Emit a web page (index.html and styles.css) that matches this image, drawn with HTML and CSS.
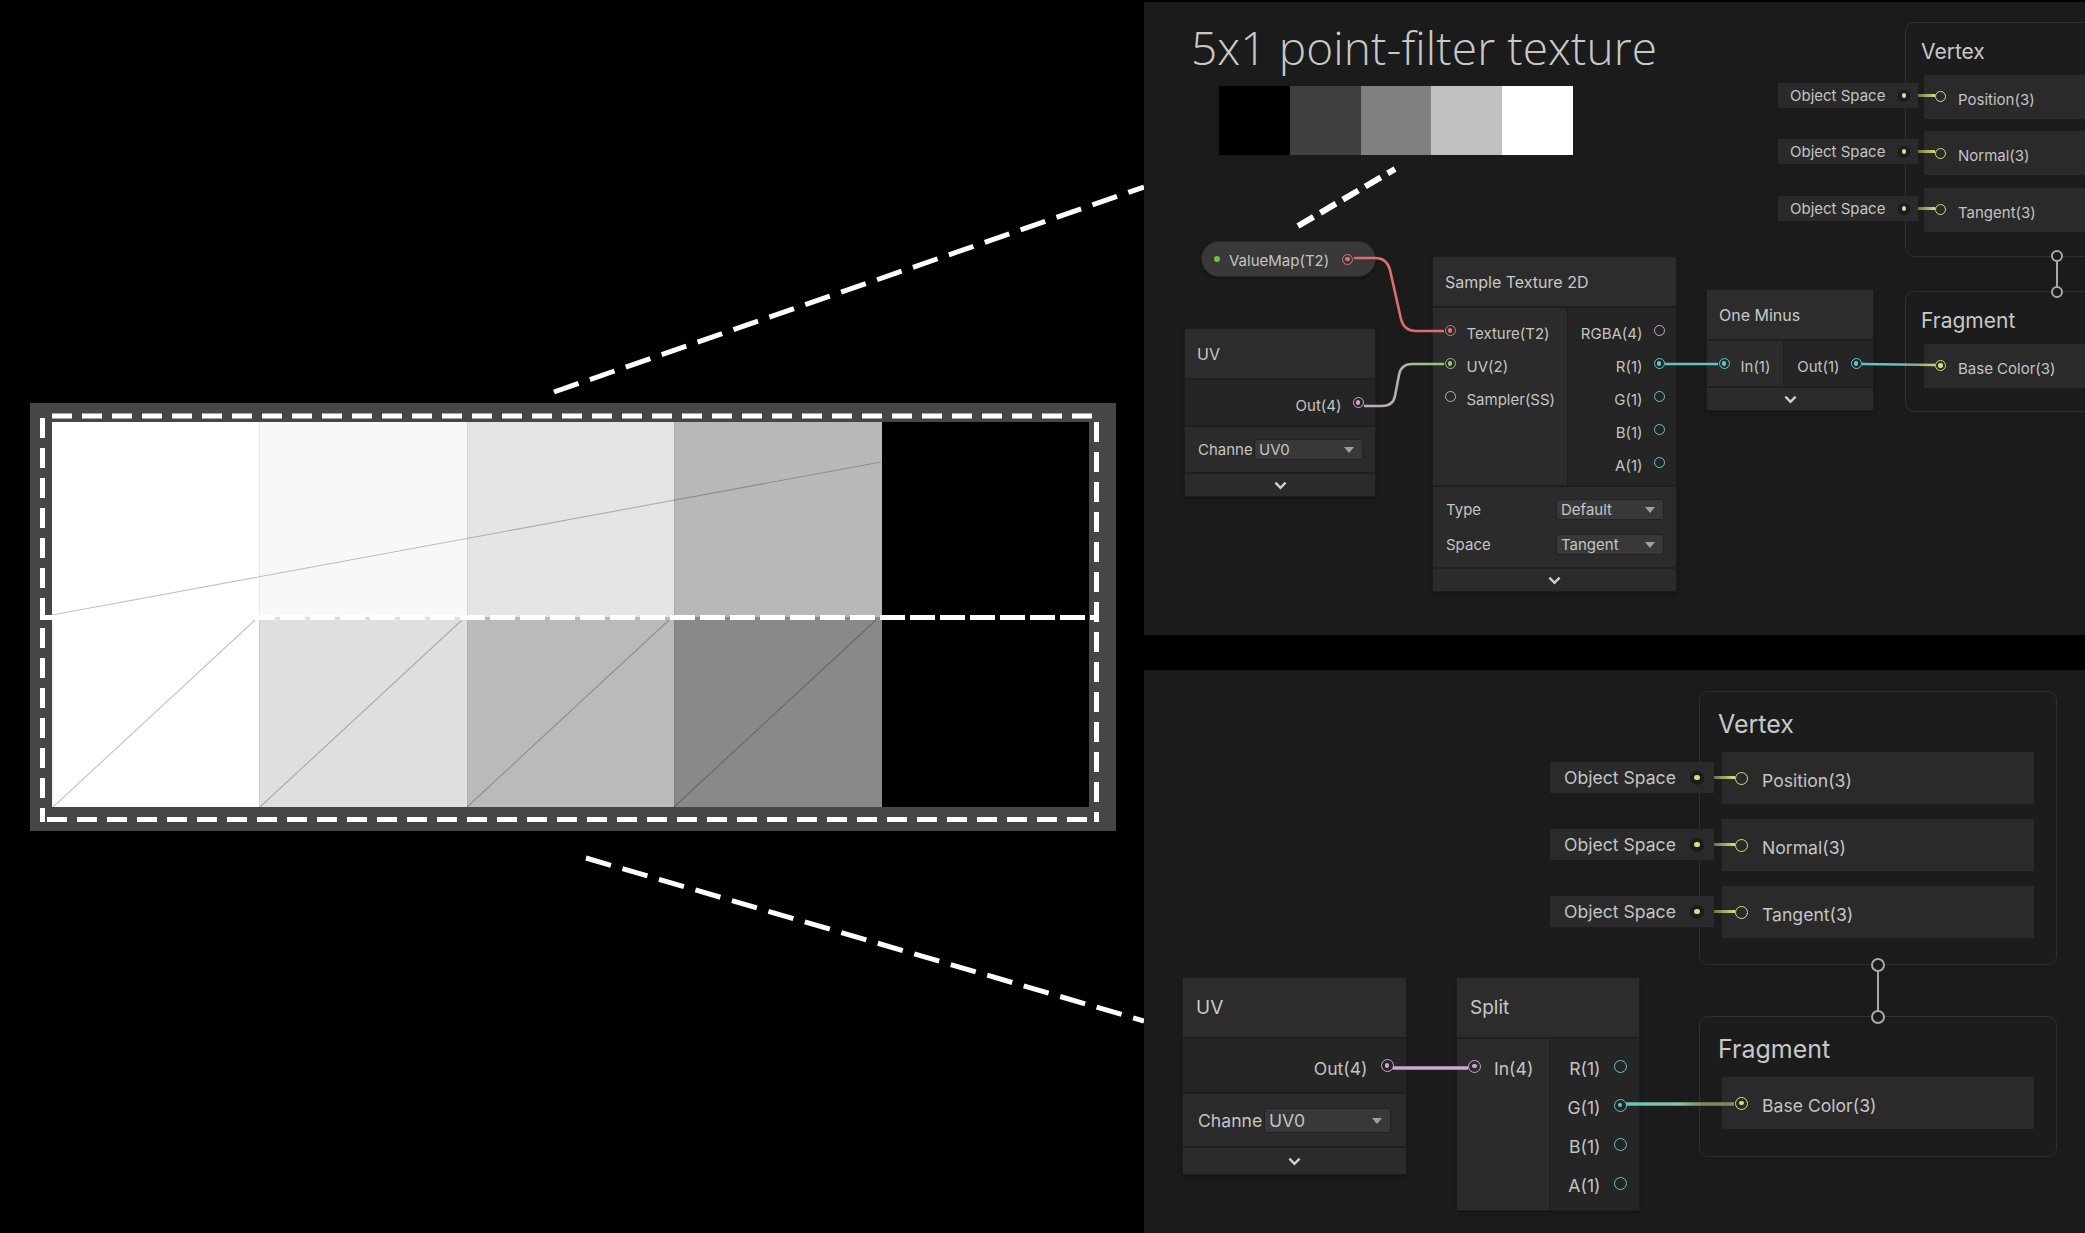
FILE: index.html
```html
<!DOCTYPE html>
<html lang="en">
<head>
  <meta charset="UTF-8">
  <meta name="viewport" content="width=device-width, initial-scale=1.0">
  <title>Point-filter texture - Shader Graph</title>
  <link rel="stylesheet" href="styles.css">
</head>
<body>
  <main class="stage">

    <!-- magnified render of the quad -->
    <section class="zoom-area">
      <div class="frame">
        <div class="texels">
          <div class="texel a1"></div>
          <div class="texel a2"></div>
          <div class="texel a3"></div>
          <div class="texel a4"></div>
          <div class="texel a5"></div>
          <div class="texel b1"></div>
          <div class="texel b2"></div>
          <div class="texel b3"></div>
          <div class="texel b4"></div>
          <div class="texel b5"></div>
        </div>
      </div>

      <svg class="overlay" width="1144" height="1233" viewBox="0 0 1144 1233">
        <!-- triangle edges -->
        <g stroke="rgba(0,0,0,0.24)" stroke-width="1.1">
          <line x1="52" y1="615" x2="881" y2="462"/>
          <line x1="53" y1="807" x2="255" y2="620"/>
          <line x1="260" y1="807" x2="462" y2="620"/>
          <line x1="467" y1="807" x2="669" y2="620"/>
          <line x1="674" y1="807" x2="876" y2="620"/>
        </g>
        <!-- selection outline -->
        <g stroke="#fff" stroke-width="5" fill="none">
          <line x1="52" y1="416" x2="1094" y2="416" stroke-dasharray="20 10"/>
          <line x1="42.5" y1="418" x2="42.5" y2="822" stroke-dasharray="20 10"/>
          <line x1="1096.5" y1="422" x2="1096.5" y2="822" stroke-dasharray="20 10"/>
          <line x1="43" y1="819.5" x2="1099" y2="819.5" stroke-dasharray="20 10" stroke-dashoffset="-4"/>
          <line x1="40" y1="617.5" x2="1099" y2="617.5" stroke-dasharray="25 5"/>
        </g>
        <!-- callout lines toward the graphs -->
        <g stroke="#fff" stroke-width="5" stroke-dasharray="26 12">
          <line x1="554" y1="392" x2="1144" y2="187"/>
          <line x1="586" y1="858" x2="1144" y2="1021"/>
        </g>
      </svg>
    </section>

    <section class="graphs">

      <!-- graph 1: sample texture, one minus -->
      <div class="graph graph-top">
        <div class="texture-card">
          <h1 class="texture-title">5x1 point-filter texture</h1>
          <div class="swatch">
            <span class="sw sw-0"></span>
            <span class="sw sw-1"></span>
            <span class="sw sw-2"></span>
            <span class="sw sw-3"></span>
            <span class="sw sw-4"></span>
          </div>
        </div>

        <div class="pill valuemap">
          <span class="pill-dot"></span>
          <span class="pill-label">ValueMap(T2)</span>
          <span class="port red on"></span>
        </div>

        <div class="node uv-top">
          <div class="node-title">UV</div>
          <div class="node-ports">
            <div class="port-col outputs">
              <div class="port-row">Out(4)<span class="port pink on"></span></div>
            </div>
          </div>
          <div class="node-controls">
            <div class="control">
              <span class="control-label">Channe</span>
              <span class="dropdown dd-channel">UV0</span>
            </div>
          </div>
          <div class="node-footer">
            <svg class="chevron" viewBox="0 0 14 9"><path d="M1.5 1.5 L7 7 L12.5 1.5"/></svg>
          </div>
        </div>

        <div class="node sample-tex">
          <div class="node-title">Sample Texture 2D</div>
          <div class="node-ports">
            <div class="port-col inputs">
              <div class="port-row"><span class="port red on"></span>Texture(T2)</div>
              <div class="port-row"><span class="port green on"></span>UV(2)</div>
              <div class="port-row"><span class="port grey"></span>Sampler(SS)</div>
            </div>
            <div class="port-col outputs">
              <div class="port-row">RGBA(4)<span class="port pink"></span></div>
              <div class="port-row">R(1)<span class="port cyan on"></span></div>
              <div class="port-row">G(1)<span class="port cyan"></span></div>
              <div class="port-row">B(1)<span class="port cyan"></span></div>
              <div class="port-row">A(1)<span class="port cyan"></span></div>
            </div>
          </div>
          <div class="node-controls settings">
            <div class="control">
              <span class="control-label">Type</span>
              <span class="dropdown dd-setting">Default</span>
            </div>
            <div class="control">
              <span class="control-label">Space</span>
              <span class="dropdown dd-setting">Tangent</span>
            </div>
          </div>
          <div class="node-footer">
            <svg class="chevron" viewBox="0 0 14 9"><path d="M1.5 1.5 L7 7 L12.5 1.5"/></svg>
          </div>
        </div>

        <div class="node one-minus">
          <div class="node-title">One Minus</div>
          <div class="node-ports">
            <div class="port-col inputs">
              <div class="port-row"><span class="port cyan on"></span>In(1)</div>
            </div>
            <div class="port-col outputs">
              <div class="port-row">Out(1)<span class="port cyan on"></span></div>
            </div>
          </div>
          <div class="node-footer">
            <svg class="chevron" viewBox="0 0 14 9"><path d="M1.5 1.5 L7 7 L12.5 1.5"/></svg>
          </div>
        </div>

        <div class="stack vertex-top">
          <div class="stack-title">Vertex</div>
          <div class="stack-slot"><span class="port yellow"></span>Position(3)</div>
          <div class="stack-slot"><span class="port yellow"></span>Normal(3)</div>
          <div class="stack-slot"><span class="port yellow"></span>Tangent(3)</div>
        </div>

        <div class="stack fragment-top">
          <div class="stack-title">Fragment</div>
          <div class="stack-slot"><span class="port yellow on"></span>Base Color(3)</div>
        </div>

        <div class="obj-space os-1"><div class="obj-box">Object Space<span class="obj-dot"></span></div><span class="obj-wire"></span></div>
        <div class="obj-space os-2"><div class="obj-box">Object Space<span class="obj-dot"></span></div><span class="obj-wire"></span></div>
        <div class="obj-space os-3"><div class="obj-box">Object Space<span class="obj-dot"></span></div><span class="obj-wire"></span></div>

        <svg class="overlay" width="941" height="633" viewBox="0 0 941 633">
          <defs>
            <linearGradient id="uvEdge" gradientUnits="userSpaceOnUse" x1="220" y1="0" x2="300" y2="0">
              <stop offset="0" stop-color="#c9a2cc"/>
              <stop offset="1" stop-color="#8cc97c"/>
            </linearGradient>
            <linearGradient id="colorEdge" gradientUnits="userSpaceOnUse" x1="718" y1="0" x2="791" y2="0">
              <stop offset="0.45" stop-color="#5fc3cc"/>
              <stop offset="0.75" stop-color="#8ea884"/>
              <stop offset="1" stop-color="#c9cf7e"/>
            </linearGradient>
          </defs>
          <line class="callout" x1="154" y1="224" x2="251" y2="167"/>
          <g fill="none" stroke-width="2.6">
            <path stroke="#dc6f6d" d="M210 256 L231 256 Q243 256 246 268 L257 317 Q260 329 272 329 L300 329"/>
            <path stroke="url(#uvEdge)" d="M220 404 L238 404 Q249 404 251 394 L255 373 Q257 362 268 362 L300 362"/>
            <line stroke="#5fc3cc" x1="521" y1="362" x2="574" y2="362"/>
            <line stroke="url(#colorEdge)" x1="718" y1="362" x2="791" y2="363"/>
          </g>
          <g class="flow" fill="#1b1b1b">
            <line x1="913" y1="259" x2="913" y2="285"/>
            <circle cx="913" cy="254" r="5"/>
            <circle cx="913" cy="290" r="5"/>
          </g>
        </svg>
      </div>

      <!-- graph 2: split -->
      <div class="graph graph-bottom">
        <div class="node uv-bottom">
          <div class="node-title">UV</div>
          <div class="node-ports">
            <div class="port-col outputs">
              <div class="port-row">Out(4)<span class="port pink on"></span></div>
            </div>
          </div>
          <div class="node-controls">
            <div class="control">
              <span class="control-label">Channe</span>
              <span class="dropdown dd-channel">UV0</span>
            </div>
          </div>
          <div class="node-footer">
            <svg class="chevron" viewBox="0 0 14 9"><path d="M1.5 1.5 L7 7 L12.5 1.5"/></svg>
          </div>
        </div>

        <div class="node split">
          <div class="node-title">Split</div>
          <div class="node-ports">
            <div class="port-col inputs">
              <div class="port-row"><span class="port pink on"></span>In(4)</div>
            </div>
            <div class="port-col outputs">
              <div class="port-row">R(1)<span class="port cyan"></span></div>
              <div class="port-row">G(1)<span class="port cyan on"></span></div>
              <div class="port-row">B(1)<span class="port cyan"></span></div>
              <div class="port-row">A(1)<span class="port cyan"></span></div>
            </div>
          </div>
        </div>

        <div class="stack vertex-bottom">
          <div class="stack-title">Vertex</div>
          <div class="stack-slot"><span class="port yellow"></span>Position(3)</div>
          <div class="stack-slot"><span class="port yellow"></span>Normal(3)</div>
          <div class="stack-slot"><span class="port yellow"></span>Tangent(3)</div>
        </div>

        <div class="stack fragment-bottom">
          <div class="stack-title">Fragment</div>
          <div class="stack-slot"><span class="port yellow on"></span>Base Color(3)</div>
        </div>

        <div class="obj-space os-1"><div class="obj-box">Object Space<span class="obj-dot"></span></div><span class="obj-wire"></span></div>
        <div class="obj-space os-2"><div class="obj-box">Object Space<span class="obj-dot"></span></div><span class="obj-wire"></span></div>
        <div class="obj-space os-3"><div class="obj-box">Object Space<span class="obj-dot"></span></div><span class="obj-wire"></span></div>

        <svg class="overlay" width="941" height="563" viewBox="0 0 941 563">
          <defs>
            <linearGradient id="splitEdge" gradientUnits="userSpaceOnUse" x1="482" y1="0" x2="590" y2="0">
              <stop offset="0" stop-color="#66c4c0"/>
              <stop offset="0.5" stop-color="#89c3a0"/>
              <stop offset="0.72" stop-color="#7f8c5c"/>
              <stop offset="1" stop-color="#7f8c5c"/>
            </linearGradient>
          </defs>
          <g stroke-width="3.4">
            <line stroke="#d2a6d5" x1="249" y1="398" x2="324" y2="398"/>
            <line stroke="url(#splitEdge)" x1="482" y1="434" x2="590" y2="434"/>
          </g>
          <g class="flow" fill="#1b1b1b">
            <line x1="734" y1="301" x2="734" y2="341"/>
            <circle cx="734" cy="295" r="6"/>
            <circle cx="734" cy="347" r="6"/>
          </g>
        </svg>
      </div>

    </section>
  </main>
</body>
</html>
```

FILE: styles.css
```css
* {
  margin: 0;
  padding: 0;
  box-sizing: border-box;
}

html, body {
  width: 2085px;
  height: 1233px;
  overflow: hidden;
  background: #000;
}

body {
  font-family: Inter, "Noto Sans", sans-serif;
  color: #c4c4c4;
}

.stage {
  display: flex;
  height: 100%;
}

.overlay {
  position: absolute;
  left: 0;
  top: 0;
  pointer-events: none;
}

/* ---------- magnified quad ---------- */

.zoom-area {
  position: relative;
  flex: 0 0 1144px;
  padding: 403px 0 0 30px;
}

.frame {
  width: 1086px;
  height: 428px;
  background: #464646;
  padding: 19px 27px 24px 22px;
}

.texels {
  display: grid;
  grid-template-columns: repeat(5, 1fr);
  grid-template-rows: 195px 190px;
  height: 100%;
}

.texel + .texel {
  border-left: 1px solid rgba(0, 0, 0, 0.06);
}

.a1, .b1 { background: #fff; border-left: none; }
.a2 { background: #f8f8f8; }
.a3 { background: #e5e5e5; }
.a4 { background: #b8b8b8; }
.a5, .b5 { background: #000; }
.b2 { background: #dfdfdf; border-left: 1px solid #c8c8c8; }
.b3 { background: #bababa; border-left: 1px solid #a0a0a0; }
.b4 { background: #898989; border-left: 1px solid #727272; }

/* ---------- shader graphs ---------- */

.graphs {
  flex: 1;
  display: flex;
  flex-direction: column;
  gap: 35px;
  padding-top: 2px;
}

.graph {
  position: relative;
  background: #1b1b1b;
  overflow: hidden;
}

.graph-top {
  height: 633px;
  --fs: 15px;
  --title-fs: 16px;
  --title-h: 49px;
  --row-h: 33px;
  --pad-y: 6px;
  --inset: 12px;
  --gap: 11px;
  --port: 11px;
  --footer-h: 22px;
  --dd-h: 21px;
  --stack-fs: 21px;
}

.graph-bottom {
  flex: 1;
  --fs: 17.6px;
  --title-fs: 19px;
  --title-h: 59px;
  --row-h: 39px;
  --pad-y: 7px;
  --inset: 13px;
  --gap: 13px;
  --port: 13px;
  --footer-h: 26px;
  --dd-h: 25px;
  --stack-fs: 25px;
}

.texture-card {
  position: absolute;
  left: 47px;
  top: 22px;
}

.texture-title {
  font-family: "Open Sans", "Noto Sans", sans-serif;
  font-weight: 300;
  font-size: 46px;
  line-height: 46px;
  letter-spacing: 0.1px;
  color: #c8c8c8;
  white-space: nowrap;
}

.swatch {
  display: flex;
  margin: 16px 0 0 28px;
  width: 354px;
  height: 69px;
}

.sw { flex: 1; }
.sw-0 { background: #000; }
.sw-1 { background: #404040; }
.sw-2 { background: #808080; }
.sw-3 { background: #c0c0c0; }
.sw-4 { background: #fff; }

.callout {
  stroke: #fff;
  stroke-width: 6;
  stroke-dasharray: 18 8;
}

.flow {
  stroke: #a8a8a8;
  stroke-width: 2;
}

/* ports */

.port {
  flex: none;
  display: inline-flex;
  align-items: center;
  justify-content: center;
  width: var(--port);
  height: var(--port);
  border: 1.6px solid currentColor;
  border-radius: 50%;
}

.port.on::after {
  content: "";
  width: 45%;
  height: 45%;
  border-radius: 50%;
  background: currentColor;
}

.red { color: #e2716f; }
.green { color: #8cc97c; }
.pink { color: #cfa3d3; }
.cyan { color: #62c6ce; }
.yellow { color: #d8dc7c; }
.grey { color: #b4b4b4; }

/* labels sit a little below their port circle */
.port-row,
.stack-slot {
  padding-top: 5px;
}

.port-row .port,
.stack-slot .port {
  margin-top: -5px;
}

/* property pill */

.pill {
  position: absolute;
  display: flex;
  align-items: center;
  height: 36px;
  padding: 2px 22px 0 12px;
  background: #393939;
  border: 1px solid #2a2a2a;
  border-radius: 18px;
  box-shadow: 0 1px 3px rgba(0, 0, 0, 0.5);
  font-size: 15px;
}

.pill .port,
.pill-dot {
  margin-top: -2px;
}

.valuemap {
  left: 57px;
  top: 239px;
  width: 175px;
}

.pill-dot {
  width: 6px;
  height: 6px;
  border-radius: 50%;
  background: #6fc04f;
  margin-right: 9px;
}

.pill-label {
  flex: 1;
}

/* nodes */

.node {
  position: absolute;
  display: flex;
  flex-direction: column;
  gap: 2px;
  background: #1f1f1f;
  box-shadow: 0 0 0 1px #1d1d1d, 0 2px 4px rgba(0, 0, 0, 0.35);
}

.node-title {
  display: flex;
  align-items: center;
  height: var(--title-h);
  padding-left: var(--inset);
  background: #2c2c2c;
  font-size: var(--title-fs);
  color: #c8c8c8;
}

.node-ports {
  display: flex;
  gap: 1px;
}

.port-col {
  padding: var(--pad-y) calc(var(--inset) - 0.5px);
}

.inputs {
  background: #2b2b2b;
}

.outputs {
  flex: 1;
  background: #252525;
}

.port-row {
  display: flex;
  align-items: center;
  gap: var(--gap);
  height: var(--row-h);
  font-size: var(--fs);
  white-space: nowrap;
}

.outputs .port-row {
  justify-content: flex-end;
}

.node-controls {
  background: #2b2b2b;
  padding: var(--pad-y) 12px var(--pad-y) 13px;
}

.control {
  display: flex;
  align-items: center;
  height: var(--row-h);
  font-size: var(--fs);
}

.settings {
  padding: 5px 12px 5px 13px;
}

.settings .control {
  height: 35px;
}

.control-label {
  flex: 1;
  white-space: nowrap;
}

.dropdown {
  display: flex;
  align-items: center;
  justify-content: space-between;
  height: var(--dd-h);
  padding: 0 8px 0 4px;
  background: #383838;
  border: 1px solid #222;
  border-radius: 3px;
  color: #c4c4c4;
}

.dropdown::after {
  content: "";
  border-left: 5px solid transparent;
  border-right: 5px solid transparent;
  border-top: 6px solid #a0a0a0;
}

.dd-setting { width: 108px; }
.dd-channel { width: 109px; }

.node-footer {
  display: flex;
  align-items: center;
  justify-content: center;
  height: var(--footer-h);
  background: #2b2b2b;
}

.chevron {
  width: 13px;
  height: 9px;
  fill: none;
  stroke: #d0d0d0;
  stroke-width: 2.6;
}

.uv-top { left: 41px; top: 327px; width: 190px; }
.sample-tex { left: 289px; top: 255px; width: 243px; }
.sample-tex .inputs { flex: 0 0 134px; }
.one-minus { left: 563px; top: 288px; width: 166px; }
.one-minus .inputs { flex: 0 0 76px; }
.one-minus .node-ports .port-col { padding-top: 6px; padding-bottom: 6px; }

.uv-bottom { left: 39px; top: 308px; width: 223px; }
.uv-bottom .dd-channel { width: 127px; }
.uv-bottom .node-controls { padding: 7px 15px 6px 15px; }
.split { left: 313px; top: 308px; width: 182px; }
.split .inputs { flex: 0 0 92px; padding-left: 11px; }
.split .port-col { padding-top: 7.5px; padding-bottom: 7px; }

/* master stack */

.stack {
  position: absolute;
  display: flex;
  flex-direction: column;
  background: #1c1c1c;
  border: 1px solid #2f2f2f;
  border-radius: 9px;
}

.stack-title {
  display: flex;
  align-items: center;
  font-size: var(--stack-fs);
  color: #c8c8c8;
}

.stack-slot {
  display: flex;
  align-items: center;
  background: #2a2a2a;
  font-size: var(--fs);
}

.vertex-top, .fragment-top {
  left: 761px;
  width: 220px;
  padding: 0 0 23px 18px;
  gap: 12.5px;
}

.vertex-top { top: 20px; height: 235px; }
.fragment-top { top: 289px; height: 121px; }

.vertex-top .stack-title,
.fragment-top .stack-title {
  height: 39px;
  padding-top: 17px;
  margin-left: -3px;
}

.vertex-top .stack-slot,
.fragment-top .stack-slot {
  height: 44px;
  padding-left: 11px;
  gap: 12px;
}

.vertex-bottom, .fragment-bottom {
  left: 555px;
  width: 358px;
  padding: 0 22px 26px 22px;
  gap: 15px;
}

.vertex-bottom { top: 21px; height: 274px; }
.fragment-bottom { top: 346px; height: 141px; }

.vertex-bottom .stack-title,
.fragment-bottom .stack-title {
  height: 45px;
  padding-top: 19px;
  margin-left: -4px;
}

.vertex-bottom .stack-slot,
.fragment-bottom .stack-slot {
  height: 52px;
  padding-left: 13px;
  gap: 14px;
}

/* inline object-space controls feeding the stack */

.obj-space {
  position: absolute;
  display: flex;
  align-items: center;
  z-index: 2;
}

.obj-box {
  display: flex;
  align-items: center;
  background: #2a2a2a;
  white-space: nowrap;
}

.obj-dot {
  display: inline-flex;
  align-items: center;
  justify-content: center;
  margin-left: auto;
  border-radius: 50%;
  background: #1b1b1b;
}

.obj-dot::after {
  content: "";
  width: 40%;
  height: 40%;
  border-radius: 50%;
  background: #d8dc7c;
}

.obj-wire {
  background: linear-gradient(90deg, #70744c, #d8dc7c);
}

.graph-top .obj-space { left: 634px; }
.graph-top .obj-box { width: 140px; height: 25px; padding-left: 12px; font-size: 15px; }
.graph-top .obj-dot { width: 12px; height: 12px; margin-right: 8px; }
.graph-top .obj-wire { width: 17px; height: 3px; }
.graph-top .os-1 { top: 81px; }
.graph-top .os-2 { top: 137px; }
.graph-top .os-3 { top: 194px; }

.graph-bottom .obj-space { left: 406px; }
.graph-bottom .obj-box { width: 164px; height: 31px; padding-left: 14px; font-size: 17.6px; }
.graph-bottom .obj-dot { width: 14px; height: 14px; margin-right: 10px; }
.graph-bottom .obj-wire { width: 21px; height: 3.5px; }
.graph-bottom .os-1 { top: 92px; }
.graph-bottom .os-2 { top: 159px; }
.graph-bottom .os-3 { top: 226px; }
```
